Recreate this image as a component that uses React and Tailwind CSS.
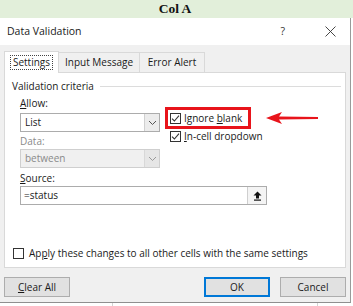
import React from "react";

const Check = () => (
  <svg width="9" height="9" viewBox="0 0 9 9" className="block">
    <path d="M1 4.6 L3.4 7 L8 1.6" fill="none" stroke="#333" strokeWidth="1.1" />
  </svg>
);

const Checkbox = ({ checked }) => (
  <span className="w-[11px] h-[11px] border border-[#333] bg-white flex items-center justify-center shrink-0">
    {checked && <Check />}
  </span>
);

const Chevron = ({ color = "#555" }) => (
  <svg width="9" height="6" viewBox="0 0 9 6">
    <path d="M1 1 L4.5 4.5 L8 1" fill="none" stroke={color} strokeWidth="1" />
  </svg>
);

const SelectBox = ({ value, disabled }) => (
  <div
    className={`flex h-[19px] w-[140px] border ${
      disabled ? "border-[#cfcfcf] bg-[#f0f0f0] text-[#8a8a8a]" : "border-[#acacac] bg-white text-[#1a1a1a]"
    }`}
  >
    <span className="flex-1 pl-[4px] leading-[17px]">{value}</span>
    <span
      className={`w-[15px] flex items-center justify-center border-l ${
        disabled ? "border-[#d8d8d8] bg-[#e6e6e6]" : "border-[#d0d0d0] bg-[#ececec]"
      }`}
    >
      <Chevron color={disabled ? "#999" : "#555"} />
    </span>
  </div>
);

const Button = ({ children, primary }) => (
  <button
    className={`h-[20px] w-[66px] text-[#1a1a1a] bg-[#e1e1e1] ${
      primary ? "border-2 border-[#0078d7]" : "border border-[#adadad]"
    }`}
  >
    {children}
  </button>
);

export default function App() {
  return (
    <div
      className="relative w-[353px] h-[306px] overflow-hidden bg-white text-[10px] text-[#1a1a1a]"
      style={{ fontFamily: '"Open Sans", "Noto Sans", sans-serif' }}
    >
      <div className="h-[18px] bg-[#e2efda] flex items-center justify-center pr-[3px]">
        <span
          className="font-bold text-[13.5px] text-[#111]"
          style={{ fontFamily: '"Liberation Serif", serif' }}
        >
          Col A
        </span>
      </div>

      <div className="w-[351px] border-r border-[#9a9a9a] bg-[#f0f0f0] h-[285px] border-b border-b-[#8f8f8f] flex flex-col">
        <div className="h-[27px] bg-white flex items-center px-[7px] text-[10.5px]">
          <span className="flex-1">Data Validation</span>
          <span className="mr-[40px] text-[#333]">?</span>
          <svg width="11" height="11" viewBox="0 0 11 11" className="mr-[7px]">
            <path d="M0.5 0.5 L10.5 10.5 M10.5 0.5 L0.5 10.5" stroke="#333" strokeWidth="0.9" />
          </svg>
        </div>

        <div className="h-[27px] flex items-end pl-[4px]">
          <div className="h-[22px] w-[55px] bg-white border border-b-0 border-[#d9d9d9] flex items-center justify-center relative z-10 -mb-px">
            <span className="border border-dotted border-[#444] px-[2px] leading-[13px]">Settings</span>
          </div>
          <div className="h-[20px] w-[81px] border border-l-0 border-b-0 border-[#d9d9d9] flex items-center justify-center">
            Input Message
          </div>
          <div className="h-[20px] w-[65px] border border-l-0 border-b-0 border-[#d9d9d9] flex items-center justify-center">
            Error Alert
          </div>
        </div>

        <div className="mx-[4px] h-[196px] bg-white border border-[#d9d9d9] flex flex-col pl-[7px] pr-[4px]">
          <div className="flex items-center mt-[5px] h-[16px]">
            <span>Validation criteria</span>
            <span className="flex-1 h-px bg-[#dcdcdc] ml-[6px]"></span>
          </div>

          <div className="flex pl-[8px]">
            <div className="flex flex-col w-[140px]">
              <span className="h-[15px] leading-[15px] mt-[2px]">
                <u>A</u>llow:
              </span>
              <div className="mt-[2px]">
                <SelectBox value="List" />
              </div>
              <span className="h-[15px] leading-[15px] mt-[2px] text-[#8a8a8a]">Data:</span>
              <div>
                <SelectBox value="between" disabled />
              </div>
            </div>
            <div className="flex flex-col ml-[10px] mt-[18px] gap-[6px]">
              <div className="flex items-center gap-[3px] h-[12px]">
                <Checkbox checked />
                <span>
                  Ignore <u>b</u>lank
                </span>
              </div>
              <div className="flex items-center gap-[3px] h-[12px]">
                <Checkbox checked />
                <span>
                  <u>I</u>n-cell dropdown
                </span>
              </div>
            </div>
          </div>

          <div className="pl-[8px] flex flex-col">
            <span className="h-[15px] leading-[15px] mt-[3px]">
              <u>S</u>ource:
            </span>
            <div className="flex h-[19px] w-[247px] border border-[#acacac] bg-white">
              <span className="flex-1 pl-[3px] leading-[17px]">=status</span>
              <span className="w-[19px] border-l border-[#cfcfcf] bg-[#f4f4f4] flex items-center justify-center">
                <svg width="9" height="10" viewBox="0 0 9 10">
                  <path d="M4.5 0.5 L8.5 4.5 L6 4.5 L6 7.5 L3 7.5 L3 4.5 L0.5 4.5 Z" fill="#111" />
                  <rect x="1" y="8.5" width="7" height="1.2" fill="#111" />
                </svg>
              </span>
            </div>
          </div>

          <div className="flex items-center gap-[5px] mt-auto mb-[6px] pl-[1px]">
            <Checkbox />
            <span>
              Ap<u>p</u>ly these changes to all other cells with the same settings
            </span>
          </div>
        </div>

        <div className="flex items-center px-[4px] mt-[9px]">
          <Button>
            <u>C</u>lear All
          </Button>
          <span className="flex-1"></span>
          <Button primary>OK</Button>
          <span className="w-[10px]"></span>
          <Button>Cancel</Button>
        </div>
      </div>

      <div className="flex h-[3px]">
        <span className="w-[113px] border-r border-[#d4d4d4]"></span>
        <span className="w-[205px] border-r border-[#d4d4d4]"></span>
      </div>

      {/* annotation */}
      <div className="absolute left-[165px] top-[107px] w-[86px] h-[22px] border-[3px] border-[#e8141b]"></div>
      <svg className="absolute left-[266px] top-[111px]" width="54" height="14" viewBox="0 0 54 14">
        <path d="M0 7 L16 1 L13 5.6 L52 6 L52 8 L13 8.4 L16 13 Z" fill="#e8141b" />
      </svg>
    </div>
  );
}
